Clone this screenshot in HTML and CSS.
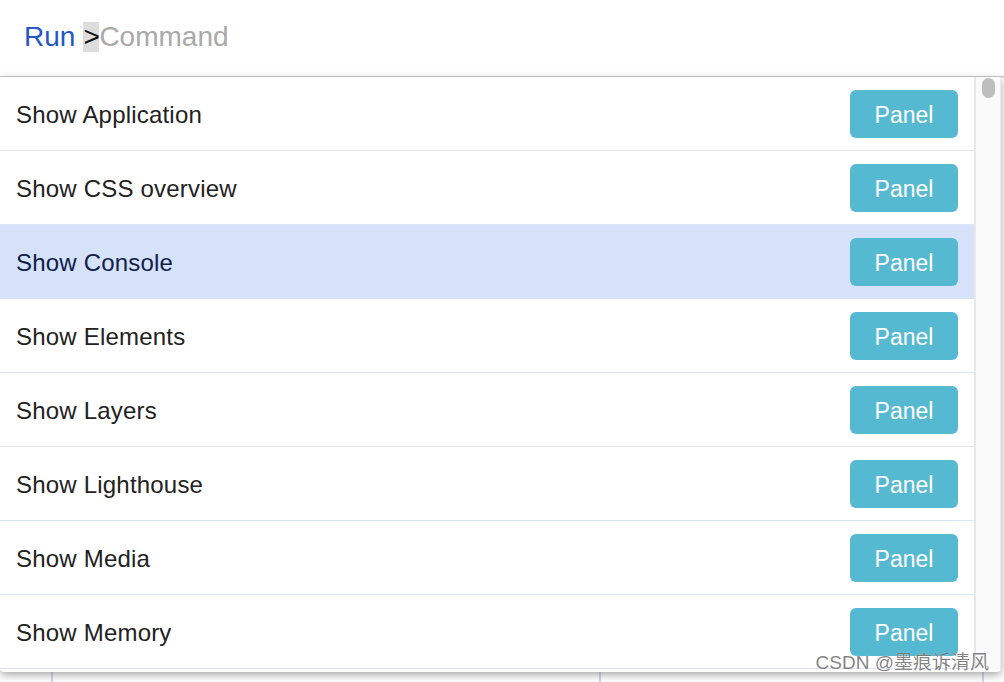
FILE: index.html
```html
<!DOCTYPE html>
<html>
<head>
<meta charset="utf-8">
<link rel="stylesheet" href="styles.css">
</head>
<body>
<header class="cmd-bar">
  <span class="run">Run</span>
  <span class="prompt">&gt;</span><span class="placeholder">Command</span>
</header>
<main class="page">
  <div class="bg-table">
    <div class="bg-col c1"></div>
    <div class="bg-col c2"></div>
    <div class="bg-col c3"></div>
    <div class="bg-col c4"></div>
  </div>
  <div class="dropdown">
    <ul class="list">
      <li class="item"><span>Show Application</span><button class="btn">Panel</button></li>
      <li class="item"><span>Show CSS overview</span><button class="btn">Panel</button></li>
      <li class="item active"><span>Show Console</span><button class="btn">Panel</button></li>
      <li class="item"><span>Show Elements</span><button class="btn">Panel</button></li>
      <li class="item"><span>Show Layers</span><button class="btn">Panel</button></li>
      <li class="item"><span>Show Lighthouse</span><button class="btn">Panel</button></li>
      <li class="item"><span>Show Media</span><button class="btn">Panel</button></li>
      <li class="item"><span>Show Memory</span><button class="btn">Panel</button></li>
    </ul>
    <div class="scrollbar"><div class="thumb"></div></div>
  </div>
  <div class="watermark">CSDN @墨痕诉清风</div>
</main>
</body>
</html>
```
FILE: styles.css
```css
html, body {
  margin: 0;
  padding: 0;
  background: #fff;
  font-family: "Liberation Sans", Arial, "Noto Sans CJK SC", sans-serif;
  overflow: hidden;
  width: 1004px;
  height: 682px;
}
.cmd-bar {
  height: 74px;
  padding-bottom: 2px;
  border-bottom: 1px solid #cccccc;
  display: flex;
  align-items: center;
  padding-left: 24px;
  font-size: 28px;
  box-sizing: content-box;
}
.run {
  color: #2456c8;
  margin-right: 8px;
}
.prompt {
  background: #dddddd;
  color: #111;
  display: inline-block;
  height: 30px;
  line-height: 30px;
  padding: 0;
  width: 16px;
  text-align: center;
}
.placeholder {
  color: #a9a9a9;
}
.page {
  position: relative;
  height: 605px;
}
.bg-table {
  display: flex;
  height: 100%;
  border-top: 1px solid #dce5f6;
}
.bg-col {
  border-right: 2px solid #cfdaf0;
}
.c1 { width: 51px; }
.c2 { width: 546px; }
.c3 { width: 381px; }
.c4 { flex: 1; border-right: none; }
.dropdown {
  position: absolute;
  top: 0;
  left: 0;
  width: 1001px;
  display: flex;
  background: #fff;
  border-radius: 0 0 4px 4px;
  box-shadow: 0 3px 8px rgba(0,0,0,0.35);
  padding-bottom: 3px;
}
.list {
  list-style: none;
  margin: 0;
  padding: 0;
  width: 974px;
}
.item {
  height: 73px;
  border-bottom: 1px solid #dbe4f5;
  display: flex;
  align-items: center;
  justify-content: space-between;
  padding: 0 16px;
  font-size: 24px;
  color: #222;
}
.item span {
  letter-spacing: 0.2px;
  padding-top: 3px;
}
.item.active {
  background: #d6e2fa;
  color: #10204a;
  border-bottom-color: #d6e2fa;
}
.btn {
  width: 108px;
  height: 48px;
  border: none;
  border-radius: 6px;
  background: #56b9d2;
  color: #fff;
  font-family: inherit;
  font-size: 23px;
  padding: 3px 0 0;
}
.scrollbar {
  flex: 1;
  background: #fafafa;
  border-left: 2px solid #e8e8e8;
  border-right: 1px solid #ececec;
  display: flex;
  justify-content: center;
}
.thumb {
  width: 13px;
  height: 20px;
  margin-top: 1px;
  border-radius: 7px;
  background: #bdbdbd;
}
.watermark {
  position: absolute;
  right: 15px;
  bottom: 8px;
  font-size: 19px;
  color: rgba(90,90,90,0.75);
  text-shadow: 0 0 1px rgba(255,255,255,0.8);
}
```
